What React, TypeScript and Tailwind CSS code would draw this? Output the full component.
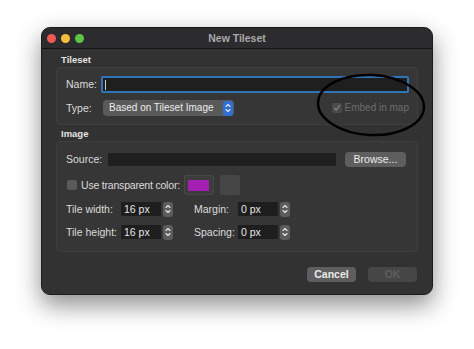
import React from "react";

function Stepper({ blue = false }: { blue?: boolean }) {
  return (
    <div
      className={`flex flex-col items-center justify-center w-[10px] h-[15px] rounded-[3px] shrink-0 ${
        blue ? "bg-[#2f6fd6]" : "bg-[#5c5c5c]"
      }`}
    >
      <svg width="6" height="10" viewBox="0 0 6 10" fill="none">
        <path d="M1 3.5 L3 1.5 L5 3.5" stroke="#e8e8e8" strokeWidth="1.1" strokeLinecap="round" strokeLinejoin="round" />
        <path d="M1 6.5 L3 8.5 L5 6.5" stroke="#e8e8e8" strokeWidth="1.1" strokeLinecap="round" strokeLinejoin="round" />
      </svg>
    </div>
  );
}

function SpinField({ value }: { value: string }) {
  return (
    <div className="flex items-center gap-[2px]">
      <div className="w-[40px] h-[14px] bg-[#1e1e1e] flex items-center pl-[3px] text-[#e6e6e6] text-[10.5px]">{value}</div>
      <Stepper />
    </div>
  );
}

export default function App() {
  return (
    <div
      className="relative w-[474px] h-[349px] bg-white overflow-hidden pt-[27px] pl-[41px] text-[10px] leading-none whitespace-nowrap"
      style={{ fontFamily: "'Liberation Sans', Arial, sans-serif" }}
    >
      <div className="w-[392px] h-[268px] rounded-[9px] bg-[#323232] shadow-[0_10px_24px_rgba(0,0,0,0.45)] border border-[#1c1c1c] flex flex-col overflow-hidden">
        {/* Title bar */}
        <div className="relative h-[21px] bg-[#2c2c2e] border-b border-[#141414] flex items-center pl-[5px] shrink-0">
          <div className="flex gap-[5px]">
            <div className="size-[9px] rounded-full bg-[#ee5b55]" />
            <div className="size-[9px] rounded-full bg-[#f5bd3e]" />
            <div className="size-[9px] rounded-full bg-[#5ec544]" />
          </div>
          <div className="absolute inset-0 flex items-center justify-center font-bold text-[#a9a9a9] text-[10.5px]">
            New Tileset
          </div>
        </div>

        <div className="flex flex-col px-[14px] pt-[6px]">
          {/* Tileset group */}
          <div className="font-bold text-[9.5px] text-[#e2e2e2] pl-[5px] h-[11px]">Tileset</div>
          <div className="mt-[1px] h-[58px] rounded-[4px] bg-[#363636] border border-[#3e3e3e] flex flex-col pl-[9px] pr-[8px] pt-[8px]">
            <div className="flex items-center h-[17px]">
              <span className="w-[35px] text-[#dcdcdc] text-[10.5px]">Name:</span>
              <div className="flex-1 h-[17px] bg-[#1f1f1f] border-2 border-[#2f74b5] rounded-[2px] flex items-center pl-[2px]">
                <div className="w-px h-[10px] bg-[#d0d0d0]" />
              </div>
            </div>
            <div className="flex items-center h-[16px] mt-[7px]">
              <span className="w-[37px] text-[#dcdcdc] text-[10.5px]">Type:</span>
              <div className="w-[131px] h-[16px] rounded-[4px] bg-[#5a5a5a] flex items-center justify-between pl-[6px] pr-[1px] text-[#ececec]">
                <span>Based on Tileset Image</span>
                <Stepper blue />
              </div>
              <div className="ml-auto flex items-center gap-[3px] text-[#6d6d6d] pr-[0px]">
                <div className="size-[10px] rounded-[2px] bg-[#4a4a4a] flex items-center justify-center">
                  <svg width="8" height="8" viewBox="0 0 8 8" fill="none">
                    <path d="M1.5 4.2 L3.2 6 L6.5 1.5" stroke="#8a8a8a" strokeWidth="1.2" strokeLinecap="round" strokeLinejoin="round" />
                  </svg>
                </div>
                <span>Embed in map</span>
              </div>
            </div>
          </div>

          {/* Image group */}
          <div className="font-bold text-[9.5px] text-[#e2e2e2] pl-[5px] h-[11px] mt-[4px]">Image</div>
          <div className="mt-[1px] h-[111px] rounded-[4px] bg-[#363636] border border-[#3e3e3e] flex flex-col pl-[9px] pr-[11px] pt-[9px]">
            <div className="flex items-center h-[16px]">
              <span className="w-[42px] text-[#dcdcdc] text-[10.5px]">Source:</span>
              <div className="w-[228px] h-[13px] bg-[#1f1f1f]" />
              <div className="ml-auto w-[61px] h-[15px] rounded-[4px] bg-[#5e5e5e] flex items-center justify-center text-[#ececec] text-[10.5px]">
                Browse...
              </div>
            </div>
            <div className="flex items-center h-[20px] mt-[8px]">
              <div className="size-[10px] rounded-[2px] bg-[#5a5a5a] ml-[1px]" />
              <span className="ml-[4px] text-[#dcdcdc] text-[10.5px] tracking-[-0.2px]">Use transparent color:</span>
              <div className="ml-[4px] w-[30px] h-[20px] bg-[#3c3c3c] border border-[#474747] rounded-[2px] flex items-center justify-center">
                <div className="w-[21px] h-[11px] bg-[#a51fb4]" />
              </div>
              <div className="ml-[6px] w-[20px] h-[20px] bg-[#464646] rounded-[2px]" />
            </div>
            <div className="flex items-center h-[16px] mt-[6px]">
              <span className="w-[55px] text-[#dcdcdc] text-[10.5px]">Tile width:</span>
              <SpinField value="16 px" />
              <span className="ml-[21px] w-[44px] text-[#dcdcdc] text-[10.5px]">Margin:</span>
              <SpinField value="0 px" />
            </div>
            <div className="flex items-center h-[16px] mt-[7px]">
              <span className="w-[55px] text-[#dcdcdc] text-[10.5px]">Tile height:</span>
              <SpinField value="16 px" />
              <span className="ml-[21px] w-[44px] text-[#dcdcdc] text-[10.5px]">Spacing:</span>
              <SpinField value="0 px" />
            </div>
          </div>

          {/* Buttons */}
          <div className="flex justify-end gap-[12px] mt-[15px] pr-[1px]">
            <div className="w-[49px] h-[15px] rounded-[4px] bg-[#5e5e5e] flex items-center justify-center text-[#ececec] font-bold text-[10.5px]">
              Cancel
            </div>
            <div className="w-[49px] h-[15px] rounded-[4px] bg-[#464646] flex items-center justify-center text-[#5f5f5f] font-bold text-[10.5px]">
              OK
            </div>
          </div>
        </div>
      </div>

      {/* hand-drawn annotation ellipse */}
      <svg className="absolute left-[314px] top-[71px]" width="116" height="70" viewBox="0 0 116 70" fill="none">
        <ellipse cx="57" cy="34" rx="53" ry="30" stroke="#000" strokeWidth="2.5" transform="rotate(3 57 34)" />
      </svg>
    </div>
  );
}
